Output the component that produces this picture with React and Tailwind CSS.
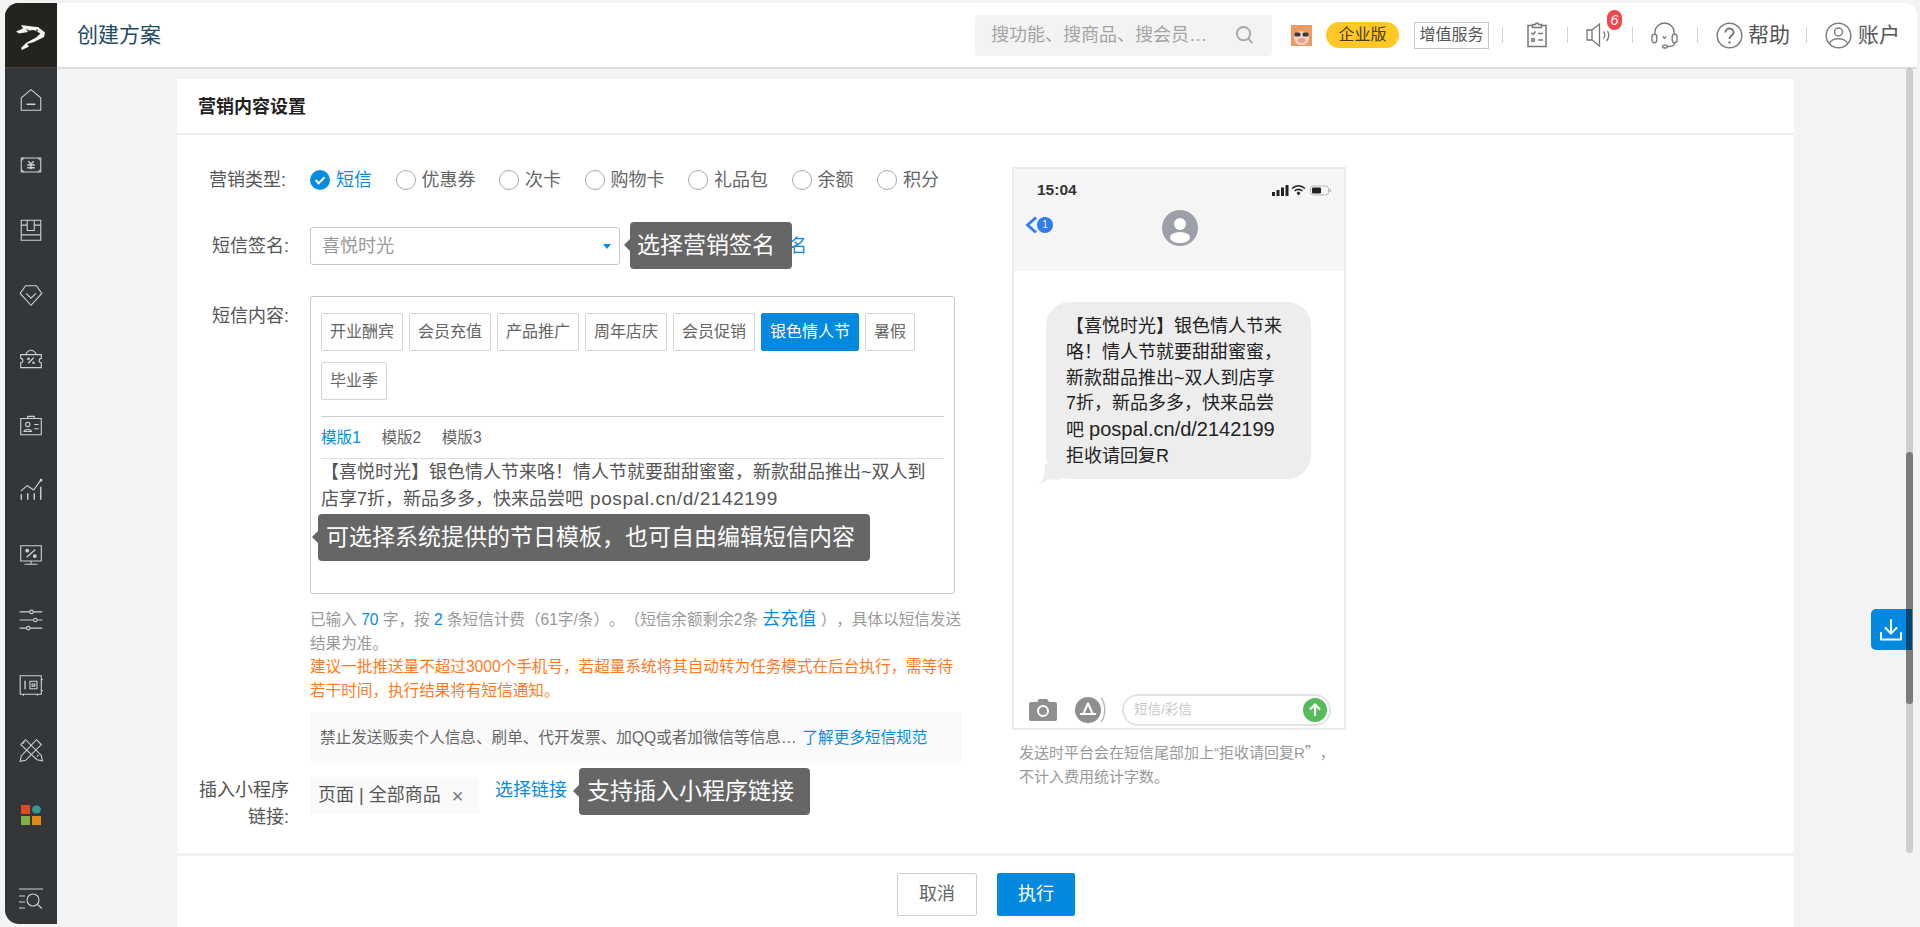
import React from 'react';

const FONT = '[font-family:"Liberation_Sans","Noto_Sans_CJK_SC",sans-serif] [text-spacing-trim:space-all]';

const Icon = ({ className = 'w-[28px] h-[28px]', stroke = '#cfd1d2', children }) => (
  <svg viewBox="0 0 24 24" fill="none" stroke={stroke} strokeWidth="1" className={className}>
    {children}
  </svg>
);

// left menu
const navIcons = [
  <><path d="M3 10 12 2.5 21 10V21.5H3Z" /><path d="M8 16h8" strokeWidth="1.4" /></>,
  <><path d="M3 5.5h18v13H3Z" /><path d="M3 8l2.5-2.5M21 8l-2.5-2.5M3 16l2.5 2.5M21 16l-2.5 2.5" /><path d="M9.5 8.5 12 11l2.5-2.5M8.5 12h7M8.5 14.500h7M12 11v5" strokeWidth="1.3" /></>,
  <><path d="M3 3h18v18.500H3Z" /><path d="M3 7.500h5.500M15 7.500h6M8.500 3v9.500h6.500V3M8.500 7.500" /><path d="M3 16.500h18" /></>,
  <><path d="M7 3.500h10l5 7-10 11-10-11Z" /><path d="m7.500 10.500 4.500 4.500 4.500-4.500" /></>,
  <><path d="M2.500 7h19v3.500a2 2 0 0 0 0 4v4.500h-19v-4.500a2 2 0 0 0 0-4Z" /><path d="M7 7c1-2 3-4 5-4s4 2 5 4" /><path d="m9.500 15 5-5" strokeWidth="1.2" /><circle cx="9.700" cy="11" r=".7" /><circle cx="14.300" cy="14.500" r=".7" /></>,
  <><path d="M2.500 6h19v15h-19Z" /><path d="M9 6V4h6v2" /><circle cx="9" cy="11.500" r="2" /><path d="M5.500 18c.5-2.500 6.500-2.500 7 0Z" /><path d="M15 11.500h4M15 15.500h4" /></>,
  <><path d="M3 21v-5M9 21v-6M15 21v-6M21 21V9" strokeWidth="1.3" /><path d="m2.500 13 6-5 6 4 6-8.500" strokeWidth="1.1" /><circle cx="21.300" cy="3" r=".8" fill="#cfd1d2" /></>,
  <><path d="M2.500 3.500h19v14h-19Z" /><path d="M12 17.500v3M6 20.500h12" /><path d="m8 14 8-7" strokeWidth="1.2" /><circle cx="8.500" cy="8" r="1.300" fill="#cfd1d2" /><circle cx="15.500" cy="13" r="1.300" fill="#cfd1d2" /></>,
  <><path d="M1.500 4.500h21M1.500 12h21M1.500 19.500h21" /><circle cx="12.500" cy="4.500" r="1.600" fill="#33373a" /><circle cx="16" cy="12" r="1.600" fill="#33373a" /><circle cx="9.500" cy="19.500" r="1.600" fill="#33373a" /></>,
  <><path d="M2 3.500h19.500v17H2ZM21.500 7h1.500M21.500 17h1.500M5 20.500v1.500M18 20.500v1.500" /><path d="M6.500 8v8" strokeWidth="1.3" /><path d="M11 8.500h6.500v7H11Z" /><path d="M13 11h2.500v2H13Z" /></>,
  <><path d="M2.500 7 7 2.500l14.500 14.500 1 5-5-1Z" /><path d="m17 2.500 4.500 4.500L7 21.500l-5 1 1-5Z" /><path d="M17.500 18l1.500-1.500M4.500 6 6 4.500" /></>,
];

const templates = ['开业酬宾', '会员充值', '产品推广', '周年店庆', '会员促销', '银色情人节', '暑假', '毕业季'];
const radios = ['短信', '优惠券', '次卡', '购物卡', '礼品包', '余额', '积分'];

const Tip = ({ className, textClass = '', children }) => (
  <div className={`absolute h-[47px] bg-[#666] rounded-[4px] flex items-center text-white text-[23px] leading-none whitespace-nowrap ${textClass} ${className}`}>
    <span className="absolute left-[-6px] top-[17px] w-0 h-0 border-y-[6px] border-y-transparent border-r-[6px] border-r-[#666]" />
    {children}
  </div>
);

const Label = ({ className = '', children }) => (
  <div className={`w-[112px] shrink-0 text-right text-[18px] text-[#555] ${className}`}>{children}</div>
);

function Sidebar() {
  return (
    <aside className="w-[52px] shrink-0 mb-[3px] flex flex-col bg-[#33373a] rounded-l-[14px] overflow-hidden">
      <div className="h-[64.500px] shrink-0 bg-[#24231f] border-b border-[#45484a] flex items-center justify-center">
        <svg viewBox="0 0 34 34" className="w-[34px] h-[34px]" fill="#f4f4f4">
          <path d="M2 13.500 9 10.500 7 7 18 8.500 24 9 31 14.500 30 19 20 24 13 26 15 28.500 8 32 7 30 12 25 22 19.500 26.500 15.500 20 12 15 12.500 12 10.500 14 14 5 15.500Z" />
          <circle cx="23" cy="12.500" r=".9" fill="#24231f" />
        </svg>
      </div>
      {navIcons.map((icon, i) => (
        <div key={i} className="h-[65px] shrink-0 flex items-center justify-center"><Icon className="w-[26px] h-[26px]">{icon}</Icon></div>
      ))}
      <div className="h-[65px] shrink-0 flex items-center justify-center">
        <svg viewBox="0 0 20 20" className="w-[20px] h-[20px]">
          <rect x="0" y="0" width="9" height="9" fill="#dd4b26" />
          <ellipse cx="15.500" cy="4.500" rx="4.500" ry="4" fill="#2f9c94" />
          <rect x="0" y="11" width="9" height="9" fill="#7cb342" />
          <rect x="11" y="11" width="9" height="9" fill="#e08a12" />
        </svg>
      </div>
      <div className="h-[18px] shrink-0" />
      <div className="h-[65px] shrink-0 flex items-center justify-center pr-[1px]">
        <svg viewBox="0 0 26 26" className="w-[26px] h-[26px]" fill="none" stroke="#cfd1d2" strokeWidth="1.100">
          <path d="M1 4h24M1 11h6M1 17h6M1 23h6" />
          <circle cx="15" cy="15" r="6" />
          <path d="m19.500 19.500 4.500 4" />
        </svg>
      </div>
    </aside>
  );
}

const Sep = ({ className = '' }) => <span className={`w-px h-[16px] bg-[#d4d4d4] shrink-0 ${className}`} />;

function Header() {
  return (
    <header className="h-[66px] shrink-0 bg-white border-b-2 border-[#dedede] rounded-tr-[12px] flex items-center pl-[20px] pr-[17px]">
      <h1 className="text-[21px] font-normal text-[#1f4a66]">创建方案</h1>
      <div className="ml-auto w-[297px] h-[41px] bg-[#f3f3f3] rounded-[4px] flex items-center pl-[16px] pr-[18px] text-[18px] text-[#a3a3a3]">
        <span className="flex-1">搜功能、搜商品、搜会员…</span>
        <svg viewBox="0 0 20 22" className="w-[19px] h-[21px]" fill="none" stroke="#a8a8a8" strokeWidth="2">
          <circle cx="9" cy="9" r="7" /><path d="m14 14 4 5" />
        </svg>
      </div>
      <svg viewBox="0 0 21 21" className="ml-[19px] w-[21px] h-[21px] shrink-0">
        <rect width="21" height="21" fill="#ee9a63" />
        <ellipse cx="10.500" cy="13" rx="7.500" ry="7" fill="#f6d8c6" />
        <rect x="3.500" y="7.500" width="6" height="4" rx="1.500" fill="#3a3a3a" />
        <rect x="11.500" y="7.500" width="6" height="4" rx="1.500" fill="#3a3a3a" />
        <ellipse cx="10.500" cy="15.500" rx="4" ry="2.500" fill="#ec9a9a" />
      </svg>
      <span className="ml-[14px] w-[73px] h-[26px] rounded-full bg-[#ffc824] flex items-center justify-center text-[16px] text-[#4a3a10] shrink-0">企业版</span>
      <span className="ml-[15px] w-[75px] h-[27px] border border-[#c9c9c9] flex items-center justify-center text-[16px] text-[#555] shrink-0">增值服务</span>
      <Sep className="ml-[13px]" />
      <svg viewBox="0 0 22 26" className="ml-[23px] w-[22px] h-[26px] shrink-0" fill="none" stroke="#777" strokeWidth="1.500">
        <path d="M6.500 3.500H2v21h18v-21h-4.500" />
        <path d="M6.500 5.500v-3h3a1.500 1.500 0 0 1 3 0h3v3Z" />
        <path d="m5.500 11 1.500 1.500 2.500-3M12 11.500h5M12 18h5" />
        <circle cx="7" cy="18" r="1.500" />
      </svg>
      <Sep className="ml-[19px]" />
      <div className="relative ml-[18px] shrink-0">
        <svg viewBox="0 0 26 24" className="w-[26px] h-[24px] block" fill="none" stroke="#777" strokeWidth="1.300">
          <path d="M1 7h5v10H1ZM6 7l7.500-6v22L6 17Z" />
          <path d="M17.500 8.500c1.500 2 1.500 5 0 7M21.500 8c2 3 2 6 -1 10" />
        </svg>
        <span className="absolute left-[21px] top-[-13px] w-[15px] h-[20px] rounded-full bg-[#f04848] text-white text-[15px] leading-[20px] text-center italic">6</span>
      </div>
      <Sep className="ml-[20px]" />
      <svg viewBox="0 0 28 28" className="ml-[18px] w-[27px] h-[27px] shrink-0" fill="none" stroke="#777" strokeWidth="1.400">
        <path d="M4 13V11a10 10 0 0 1 20 0v2" />
        <rect x="1" y="12.500" width="5" height="9" rx="2.500" />
        <rect x="22" y="12.500" width="5" height="9" rx="2.500" />
        <path d="M24.500 21.500c0 3-4 4-8 4" />
        <rect x="12" y="24" width="5" height="3" rx="1.500" />
        <path d="m12 15 2 2 2-2" />
      </svg>
      <Sep className="ml-[19px]" />
      <svg viewBox="0 0 27 27" className="ml-[18px] w-[27px] h-[27px] shrink-0" fill="none" stroke="#7b7b7b" strokeWidth="1.500">
        <circle cx="13.500" cy="13.500" r="12.300" />
        <path d="M9.500 10.500c0-5.500 8-5.500 8 0 0 3-4 3-4 6.500" strokeWidth="2" />
        <circle cx="13.500" cy="20.500" r="1.200" fill="#7b7b7b" stroke="none" />
      </svg>
      <span className="ml-[5px] text-[21px] text-[#555] shrink-0">帮助</span>
      <Sep className="ml-[16px]" />
      <svg viewBox="0 0 27 27" className="ml-[18px] w-[27px] h-[27px] shrink-0" fill="none" stroke="#7b7b7b" strokeWidth="1.500">
        <circle cx="13.500" cy="13.500" r="12.300" />
        <circle cx="13.500" cy="10" r="4" />
        <path d="M4.500 22c1-7 17-7 18 0" />
      </svg>
      <span className="ml-[6px] text-[21px] text-[#555] shrink-0">账户</span>
    </header>
  );
}

function Phone() {
  return (
    <div className="ml-[51px] shrink-0 w-[334px]">
      <div className="h-[563px] border-2 border-[#ececec] flex flex-col">
        <div className="h-[102px] shrink-0 bg-[#f6f6f6] relative">
          <div className="flex items-center justify-between pl-[23px] pr-[12px] pt-[10px] h-[32px]">
            <span className="text-[15.500px] font-bold text-[#333]">15:04</span>
            <svg viewBox="0 0 60 12" className="w-[60px] h-[12px]">
              <rect x="0" y="8" width="3" height="4" fill="#222" /><rect x="4.500" y="6" width="3" height="6" fill="#222" /><rect x="9" y="3.500" width="3" height="8.500" fill="#222" /><rect x="13.500" y="1" width="3" height="11" fill="#222" />
              <path d="M20 4.500c4-3.500 9-3.500 13 0M22.500 7c2.500-2 5.500-2 8 0" fill="none" stroke="#222" strokeWidth="1.600" /><path d="m24.500 9 2-1.500 2 1.500-2 2.500Z" fill="#222" />
              <rect x="38.500" y="2" width="18" height="9" rx="2.500" fill="none" stroke="#bbb" /><rect x="40" y="3.500" width="9" height="6" rx="1" fill="#222" /><rect x="57.500" y="5" width="1.500" height="3" fill="#bbb" />
            </svg>
          </div>
          <div className="flex items-start pl-[11px] pt-[11px]">
            <svg viewBox="0 0 12 18" className="w-[12px] h-[18px] mt-[4px]" fill="none" stroke="#2f7cf0" strokeWidth="2.800"><path d="M11 1.500 2.500 9l8.500 7.500" /></svg>
            <span className="w-[16px] h-[16px] rounded-full bg-[#2f7cf0] text-white text-[10px] leading-[16px] text-center mt-[5px]">1</span>
            <svg viewBox="0 0 36 36" className="ml-[109px] -mt-[2px] w-[36px] h-[36px]">
              <circle cx="18" cy="18" r="18" fill="#9da0a8" />
              <circle cx="18" cy="14" r="6" fill="#fff" />
              <ellipse cx="18" cy="27.500" rx="10" ry="5.500" fill="#fff" />
            </svg>
          </div>
        </div>
        <div className="flex-1 relative pl-[32px] pt-[31px]">
          <div className="relative w-[265px] h-[177px] rounded-[24px] bg-[#ededed] pl-[20px] pt-[12px] text-[18px] leading-[25.800px] text-[#222] whitespace-nowrap">
            <svg viewBox="0 0 26 20" className="absolute left-[-10px] bottom-[-5px] w-[26px] h-[20px]" fill="#ededed"><path d="M0 20c6-1 9-6 9-20h17v15c-6 1-11 1-14 0-3 3-7 5-12 5Z" /></svg>
            <div className="relative">
              【喜悦时光】银色情人节来<br />
              咯！情人节就要甜甜蜜蜜，<br />
              新款甜品推出~双人到店享<br />
              7折，新品多多，快来品尝<br />
              吧 <span className="text-[20px]">pospal.cn/d/2142199</span><br />
              拒收请回复R
            </div>
          </div>
          <div className="absolute left-[15px] right-[13px] bottom-[2px] h-[32px] flex items-center">
            <svg viewBox="0 0 28 22" className="w-[28px] h-[22px] shrink-0">
              <path d="M2 3h6l2-3h8l2 3h6a2 2 0 0 1 2 2v15a2 2 0 0 1-2 2H2a2 2 0 0 1-2-2V5a2 2 0 0 1 2-2Z" fill="#8f8f8f" />
              <circle cx="14" cy="12" r="5" fill="none" stroke="#fff" strokeWidth="2" />
            </svg>
            <svg viewBox="0 0 31 26" className="ml-[18px] w-[31px] h-[26px] shrink-0">
              <path d="M26 1c5 6 5 18 0 24" fill="none" stroke="#bbb" strokeWidth="1.500" />
              <circle cx="13" cy="13" r="13" fill="#8f8f8f" />
              <path d="M13 6 8 18M13 6l5 12M5 17h16" stroke="#fff" strokeWidth="2" fill="none" />
            </svg>
            <div className="ml-[16px] flex-1 h-[32px] rounded-full border-2 border-[#e4e4e4] flex items-center pl-[10px] pr-[2px] text-[13.500px] text-[#c8c8c8]">
              <span className="flex-1">短信/彩信</span>
              <svg viewBox="0 0 24 24" className="w-[24px] h-[24px]">
                <circle cx="12" cy="12" r="12" fill="#57bb5a" />
                <path d="M12 18V7M7 11.500 12 6.500l5 5" stroke="#fff" strokeWidth="2.200" fill="none" />
              </svg>
            </div>
          </div>
        </div>
      </div>
      <p className="mt-[10px] ml-[7px] text-[15px] leading-[24px] text-[#999] whitespace-nowrap">发送时平台会在短信尾部加上“拒收请回复R<span className='[font-family:"Noto_Sans_CJK_SC",sans-serif]'>”</span>，<br />不计入费用统计字数。</p>
    </div>
  );
}

function Form() {
  return (
    <div className="w-[784px] shrink-0 pt-[26px]">
      <div className="flex items-center h-[38px]">
        <Label className="pr-[3px]">营销类型:</Label>
        <div className="ml-[21px] flex items-center gap-[23.500px] text-[18px] text-[#666] whitespace-nowrap">
          {radios.map((r, i) => (
            <label key={r} className={`flex items-center gap-[6px] ${i === 0 ? 'text-[#0a8be0]' : ''}`}>
              {i === 0 ? (
                <svg viewBox="0 0 20 20" className="w-[20px] h-[20px]">
                  <circle cx="10" cy="10" r="10" fill="#0a8be0" />
                  <path d="m5.500 10 3.200 3.200 5.800-6" stroke="#fff" strokeWidth="2" fill="none" />
                </svg>
              ) : (
                <span className="w-[20px] h-[20px] rounded-full border border-[#aaa]" />
              )}
              {r}
            </label>
          ))}
        </div>
      </div>

      <div className="mt-[28px] flex items-center h-[38px] relative">
        <Label>短信签名:</Label>
        <div className="ml-[21px] w-[310px] h-[38px] border border-[#c8c8c8] rounded-[3px] flex items-center pl-[11px] pr-[8px] text-[18px] text-[#999]">
          <span className="flex-1">喜悦时光</span>
          <span className="w-0 h-0 border-x-[4px] border-x-transparent border-t-[5px] border-t-[#0a8be0]" />
        </div>
        <a className="ml-[115px] text-[18px] text-[#0a8be0] whitespace-nowrap">新增签名</a>
        <Tip className="left-[453px] top-[-5px] w-[162px] pl-[7px]">选择营销签名</Tip>
      </div>

      <div className="mt-[31px] flex items-start">
        <Label className="pt-[7px]">短信内容:</Label>
        <div className="ml-[21px] relative w-[645px] h-[298px] border border-[#c8c8c8] rounded-[3px] px-[10px] pt-[16px]">
          <div className="flex flex-wrap gap-x-[6px] gap-y-[11px]">
            {templates.map((t, i) => (
              <span key={t} className={`h-[38px] px-[8px] flex items-center rounded-[2px] border text-[16px] whitespace-nowrap ${i === 5 ? 'bg-[#0389df] border-[#0389df] text-white' : 'border-[#d4d4d4] text-[#666]'}`}>{t}</span>
            ))}
          </div>
          <div className="mt-[16px] border-t border-[#cfcfcf] h-[42px] flex items-center gap-[20.500px] text-[15.600px] text-[#666]">
            <span className="text-[#0a8be0]">模版1</span><span>模版2</span><span>模版3</span>
          </div>
          <div className="border-t border-[#dedede] pr-[12px] text-[18px] leading-[26.500px] text-[#555]">
            【喜悦时光】银色情人节来咯！情人节就要甜甜蜜蜜，新款甜品推出~双人到店享7折，新品多多，快来品尝吧 <span className="ml-[2px] text-[19px] tracking-[0.6px]">pospal.cn/d/2142199</span>
          </div>
          <Tip className="left-[7px] top-[217px] w-[552px] pl-[8px]">可选择系统提供的节日模板，也可自由编辑短信内容</Tip>
        </div>
      </div>

      <div className="mt-[14px] ml-[133px] w-[651px] text-[15.600px] leading-[23.500px] text-[#999]">
        <p className="whitespace-nowrap">已输入<span className="text-[#0a8be0]"> 70 </span>字，按<span className="text-[#0a8be0]"> 2 </span>条短信计费（61字/条）。（短信余额剩余2条 <span className="text-[18px] text-[#0a8be0]">去充值</span> ），具体以短信发送</p>
        <p>结果为准。</p>
        <p className="text-[#ff7a1f] whitespace-nowrap">建议一批推送量不超过3000个手机号，若超量系统将其自动转为任务模式在后台执行，需等待</p>
        <p className="text-[#ff7a1f]">若干时间，执行结果将有短信通知。</p>
      </div>

      <div className="mt-[10px] ml-[133px] w-[651px] h-[51px] bg-[#fafafa] flex items-center pl-[10px] text-[15.600px] text-[#666] whitespace-nowrap">
        禁止发送贩卖个人信息、刷单、代开发票、加QQ或者加微信等信息…<span className="ml-[6px] text-[#0a8be0]">了解更多短信规范</span>
      </div>

      <div className="mt-[14px] flex items-start relative">
        <Label className="pl-[20px] leading-[27px]">插入小程序链接:</Label>
        <div className="ml-[21px] w-[169px] h-[37px] bg-[#fafafa] flex items-center pl-[8px] text-[18px] text-[#555] whitespace-nowrap">
          页面 | 全部商品<span className="ml-[11px] text-[#777] text-[20px] leading-none">×</span>
        </div>
        <a className="ml-[16px] text-[18px] leading-[27px] text-[#0a8be0] whitespace-nowrap">选择链接</a>
        <Tip className="left-[402px] top-[-9px] w-[231px] pl-[8px]">支持插入小程序链接</Tip>
      </div>
    </div>
  );
}

export default function App() {
  return (
    <div className={`relative h-[927px] w-full overflow-hidden bg-[#f3f3f3] flex pt-[3px] pl-[5px] pr-[3px] ${FONT}`}>
      <Sidebar />
      <main className="flex-1 min-w-0 flex flex-col">
        <Header />
        <div className="flex-1 min-h-0 pt-[10px] pl-[120px]">
          <section className="w-[1617px] h-full bg-white flex flex-col">
            <div className="h-[56px] shrink-0 border-b-2 border-[#efefef] flex items-center pl-[21px] pt-[2px] text-[18px] font-bold text-[#222]">营销内容设置</div>
            <div className="flex-1 min-h-0 flex items-start">
              <Form />
              <div className="pt-[32px]"><Phone /></div>
            </div>
            <div className="h-[74px] shrink-0 border-t-[3px] border-[#f1f1f1] flex justify-center items-start pt-[17px] gap-[20px] pl-[1px]">
              <button className="w-[80px] h-[43px] border border-[#cfcfcf] rounded-[2px] bg-white text-[18px] text-[#666]">取消</button>
              <button className="w-[78px] h-[43px] rounded-[2px] bg-[#0389df] text-[18px] text-white">执行</button>
            </div>
          </section>
        </div>
      </main>
      {/* floating bits over the page */}
      <div className="absolute left-[1871px] top-[609px] w-[41px] h-[41px] rounded-l-[5px] bg-[#0389df] flex items-center justify-center pr-[1px]">
        <svg viewBox="0 0 24 24" className="w-[24px] h-[24px]" fill="none" stroke="#fff" strokeWidth="2" strokeLinecap="round" strokeLinejoin="round">
          <path d="M12 2v13M6.500 10l5.500 5.500 5.500-5.500M2 15v6.500h20V15" />
        </svg>
      </div>
      <div className="absolute left-[1906px] top-[68px] w-[7px] h-[785px] rounded-full bg-[#000]/15">
        <div className="absolute top-[384px] w-[7px] h-[252px] rounded-full bg-[#000]/40" />
      </div>
    </div>
  );
}
